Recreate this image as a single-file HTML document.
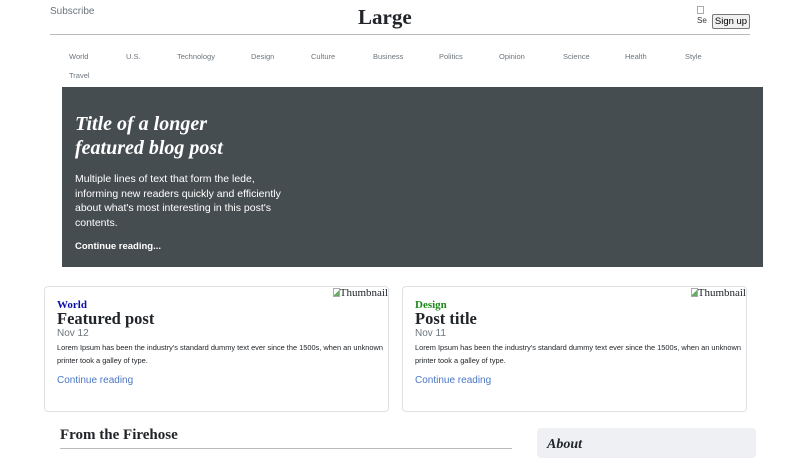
<!DOCTYPE html>
<html><head><meta charset="utf-8"><style>
*{box-sizing:border-box;margin:0;padding:0}
body{width:800px;height:450px;overflow:hidden;background:#fff;font-family:"Liberation Sans",sans-serif;color:#212529;position:relative}
.abs{position:absolute}
.serif{font-family:"Liberation Serif",serif}
.nav span{position:absolute;top:52px;font-size:7.5px;color:#6c757d}
.card{position:absolute;top:286px;width:345px;height:126px;border:1px solid #dee2e6;border-radius:4px;background:#fff}
.card .cat{position:absolute;left:12px;top:12px;font:bold 11px "Liberation Serif",serif}
.card h3{position:absolute;left:12px;top:22px;font:bold 16.5px "Liberation Serif",serif;color:#212529}
.card .date{position:absolute;left:12px;top:41px;font-size:10px;color:#6c757d}
.card p{position:absolute;left:12px;top:54px;width:330px;font-size:7.4px;line-height:13px;color:#212529}
.card a{position:absolute;left:12px;top:88px;font-size:10px;color:#4b77c4;text-decoration:none}
.card .th{position:absolute;right:0;top:0;font:11px "Liberation Serif",serif;color:#212529}
.th i{display:inline-block;width:7px;height:9px;border:1px solid #aaa;vertical-align:-1px;background:linear-gradient(135deg,#fff 50%,#6a6 50%)}
</style></head><body>
<div class="abs" style="left:50px;top:6px;font-size:10px;color:#6c757d">Subscribe</div>
<div class="abs serif" style="left:358px;top:5px;font-size:21px;font-weight:bold;color:#212529">Large</div>
<div class="abs" style="left:697px;top:6px;font-size:8px;color:#333;line-height:9px;width:10px;overflow:hidden"><i style="display:inline-block;width:7px;height:8px;border:1px solid #aaa"></i><br>Se</div>
<div class="abs" style="left:712px;top:14px;width:38px;height:15px;border:1px solid #777;border-radius:2px;background:#f0f0f0;font-size:9.5px;text-align:center;line-height:13px;color:#000">Sign up</div>
<div class="abs" style="left:50px;top:34px;width:700px;height:1px;background:#bbb"></div>
<div class="nav">
<span style="left:69px">World</span><span style="left:126px">U.S.</span><span style="left:177px">Technology</span><span style="left:251px">Design</span><span style="left:311px">Culture</span><span style="left:373px">Business</span><span style="left:439px">Politics</span><span style="left:499px">Opinion</span><span style="left:563px">Science</span><span style="left:625px">Health</span><span style="left:685px">Style</span><span style="left:69px;top:71px">Travel</span>
</div>
<div class="abs" style="left:62px;top:87px;width:701px;height:180px;background:#464d51;color:#fff">
<div class="serif" style="position:absolute;left:13px;top:25px;font-size:20px;font-style:italic;font-weight:bold;line-height:24px">Title of a longer<br>featured blog post</div>
<div style="position:absolute;left:13px;top:85px;width:220px;font-size:10.5px;line-height:14.5px">Multiple lines of text that form the lede, informing new readers quickly and efficiently about what's most interesting in this post's contents.</div>
<div style="position:absolute;left:13px;top:154px;font-size:9.5px;font-weight:bold">Continue reading...</div>
</div>
<div class="card" style="left:44px">
<div class="th"><i></i>Thumbnail</div>
<div class="cat" style="color:#0d0dab">World</div>
<h3>Featured post</h3>
<div class="date">Nov 12</div>
<p>Lorem Ipsum has been the industry's standard dummy text ever since the 1500s, when an unknown printer took a galley of type.</p>
<a>Continue reading</a>
</div>
<div class="card" style="left:402px">
<div class="th"><i></i>Thumbnail</div>
<div class="cat" style="color:#198a19">Design</div>
<h3>Post title</h3>
<div class="date">Nov 11</div>
<p>Lorem Ipsum has been the industry's standard dummy text ever since the 1500s, when an unknown printer took a galley of type.</p>
<a>Continue reading</a>
</div>
<div class="abs serif" style="left:60px;top:427px;font-size:15px;font-weight:bold;color:#212529">From the Firehose</div>
<div class="abs" style="left:60px;top:448px;width:452px;height:1px;background:#bbb"></div>
<div class="abs" style="left:537px;top:428px;width:219px;height:30px;background:#eef0f3;border-radius:4px"></div>
<div class="abs serif" style="left:547px;top:437px;font-size:14px;font-style:italic;font-weight:bold;color:#212529">About</div>
</body></html>
